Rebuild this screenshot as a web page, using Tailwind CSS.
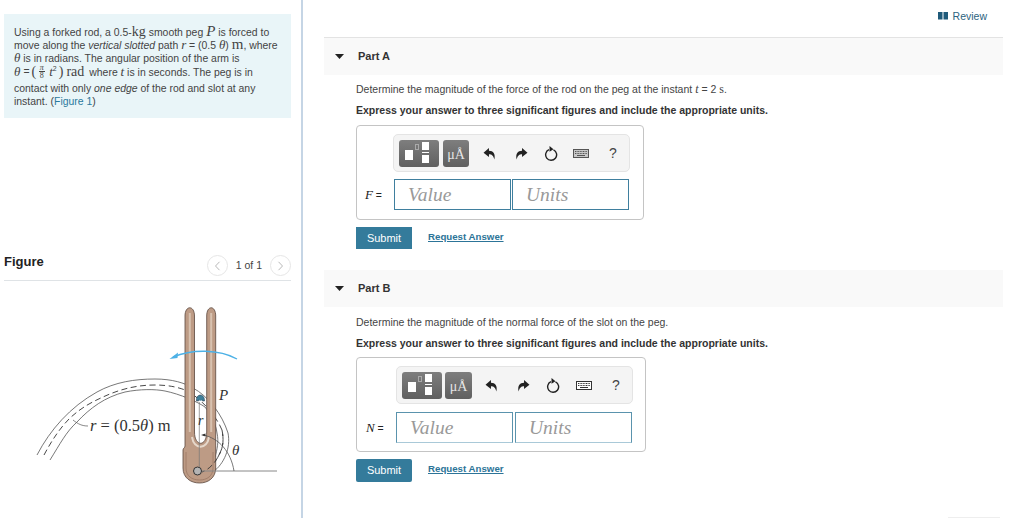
<!DOCTYPE html>
<html>
<head>
<meta charset="utf-8">
<script src="https://cdn.jsdelivr.net/npm/@tailwindcss/browser@4"></script>
</head>
<body class="bg-white font-['Liberation_Sans',Arial,sans-serif] text-[#333]">
<div class="relative flex w-[1024px] h-[518px] overflow-hidden">
  <!-- left -->
  <div class="w-[303px] h-[518px] shrink-0 border-r-2 border-[#c5d5e5] pt-[14px] pl-[4px]">
    <div class="w-[287px] h-[104px] bg-[#e9f5f8] pl-[10px] pt-[11px] text-[10.45px] leading-[13px] text-[#444]">
      <div class="h-[13px] whitespace-nowrap">Using a forked rod, a 0.5-<span class="font-['Liberation_Serif',serif] text-[14px]">kg</span> smooth peg <i class="font-['Liberation_Serif',serif] text-[15px]">P</i> is forced to</div>
      <div class="h-[13px] whitespace-nowrap">move along the <i>vertical slotted</i> path <i class="font-['Liberation_Serif',serif] text-[13px]">r</i> = (0.5 <i class="font-['Liberation_Serif',serif] text-[13px]">θ</i>) <span class="font-['Liberation_Serif',serif] text-[15px]">m</span>, where</div>
      <div class="h-[13px] whitespace-nowrap"><i class="font-['Liberation_Serif',serif] text-[13px]">θ</i> is in radians. The angular position of the arm is</div>
      <div class="h-[15px] flex items-center whitespace-nowrap"><i class="font-['Liberation_Serif',serif] text-[13px]">θ</i><span class="ml-[3px]">=</span><span class="ml-[2px] font-['Liberation_Serif',serif] text-[14px]">(</span><span class="inline-flex flex-col items-center w-[9px] font-['Liberation_Serif',serif] text-[8px] leading-[7px] ml-[1px]"><i class="border-b border-[#444] px-[1px]">π</i><span>8</span></span><i class="ml-[3px] font-['Liberation_Serif',serif] text-[13px]">t</i><span class="text-[7px] -mt-[6px]">2</span><span class="ml-[2px] font-['Liberation_Serif',serif] text-[14px]">)</span><span class="ml-[3px] font-['Liberation_Serif',serif] text-[14px]">rad</span><span class="ml-[5px]">where <i class="font-['Liberation_Serif',serif] text-[13px]">t</i> is in seconds. The peg is in</span></div>
      <div class="h-[13px] mt-[3px] whitespace-nowrap">contact with only <i>one edge</i> of the rod and slot at any</div>
      <div class="h-[13px] whitespace-nowrap">instant. (<span class="text-[#2a7a9e]">Figure 1</span>)</div>
    </div>
    <div class="w-[287px] h-[36px] mt-[127px] border-b border-[#dfe3e6] flex justify-between">
      <div class="text-[13px] font-bold text-[#222] mt-[9px] leading-[16px]">Figure</div>
      <div class="flex items-center gap-[8px] h-[21px] mt-[10px] text-[10.5px] text-[#444]">
        <div class="w-[21px] h-[21px] rounded-full border border-[#e6e6e6] flex items-center justify-center"><svg width="7" height="10" viewBox="0 0 7 10" fill="none" stroke="#b8b8b8" stroke-width="1"><path d="M5.500 .8 1.500 5l4 4.200"/></svg></div>
        <span>1 of 1</span>
        <div class="w-[21px] h-[21px] rounded-full border border-[#e6e6e6] flex items-center justify-center"><svg width="7" height="10" viewBox="0 0 7 10" fill="none" stroke="#b8b8b8" stroke-width="1"><path d="M1.500 .8 5.500 5l-4 4.200"/></svg></div>
      </div>
    </div>
    <svg class="block" width="296" height="237" viewBox="4 281 296 237" font-family="'Liberation Serif',serif" fill="none">
      <!-- curved slot -->
      <path d="M37 455C50 430 70 407 97 392C115 382 135 379 155 379C172 379 185 383 193 388C208 396 222 414 228 433C231 448 224 464 213 472" stroke="#555" stroke-width=".8"/>
      <path d="M50 460C60 444 66 432 77 422C90 408 105 397 125 392C140 389 155 389 165 391C180 394 198 402 205 407C212 416 216 425 217 433C219 442 217 450 215 457" stroke="#555" stroke-width=".8"/>
      <path d="M44 455C52 440 60 428 70 418C82 407 92 402 103 397C118 390 135 385 155 385C170 385 180 388 185 390C195 394 214 411 222 430C224 440 223 447 220 453C215 464 208 470 202 472" stroke="#333" stroke-width=".9" stroke-dasharray="6 3.500"/>
      <!-- rod -->
      <path d="M185 316C185 305 194.500 305 194.500 316V432C194.500 447 206.700 447 206.700 432V316C206.700 305 215.700 305 215.700 316V468C215.700 478 208 483 199.500 483C191 483 183 478 183 468V450C183 448 185 448 185 446Z" fill="#bd9b85" stroke="#5a463c" stroke-width=".8"/>
      <path d="M189.800 313V432M211.200 313V432" stroke="#d8c2b0" stroke-width="2"/>
      <path d="M192 437C194 450 207 450 209 437" stroke="#e6d8cb" stroke-width="2"/>
      <path d="M186 452V468C186 476 192 480 199.500 480C207 480 213 476 213 468V452" stroke="#a27f6b" stroke-width="1"/>
      <path d="M222 430C224 440 223 447 220 453C215 464 208 470 202 472" stroke="#333" stroke-width=".9" stroke-dasharray="6 3.500"/>
      <path d="M199.300 402V468" stroke="#777" stroke-width=".7"/>
      <circle cx="197.500" cy="471" r="4" fill="#b4b4b4" stroke="#333" stroke-width="1"/>
      <path d="M202 471H277" stroke="#888" stroke-width="1"/>
      <path d="M203 435C219 438 231 452 234 471" stroke="#555" stroke-width=".8"/>
      <path d="M201 435l4.500 -1.600v3.200z" fill="#333"/>
      <!-- peg -->
      <path d="M196.500 401C195.500 393 205 393 204.500 401H202.500C202.500 397.500 198.500 397.500 198.500 401Z" fill="#3f7f99" stroke="#234" stroke-width=".5"/>
      <circle cx="200.500" cy="398.500" r="2.200" fill="#3f7f99"/>
      <!-- arrow -->
      <path d="M237 359C219 349 192 349 173 357" stroke="#4db1e6" stroke-width="1.400"/>
      <path d="M169.500 359 178 352.500 177.500 358Z" fill="#4db1e6"/>
      <path d="M73 420C78 424 82 426 88 426" stroke="#555" stroke-width=".7"/>
      <g fill="#333" font-size="16.500">
        <text x="90" y="431"><tspan font-style="italic">r</tspan> = (0.5<tspan font-style="italic">θ</tspan>) m</text>
        <text x="219" y="400" font-style="italic" font-size="15">P</text>
        <text x="232" y="455" font-style="italic" font-size="15">θ</text>
        <text x="198" y="425" font-style="italic" font-size="14">r</text>
      </g>
    </svg>
  </div>
  <!-- right -->
  <div class="flex-1 pl-[21px] pt-[10px] min-w-0">
    <div class="w-[679px] h-[27px] flex justify-end items-start pr-[16px]">
      <div class="flex items-center gap-[5px] text-[10.5px] leading-[12px] text-[#2c6380]"><svg width="10" height="8" viewBox="0 0 10 8"><path d="M0 0H4.500V7.500H0ZM5.500 0H10V7.500H5.500Z" fill="#1f5a7a"/></svg>Review</div>
    </div>

    <section class="w-[679px] h-[233px]">
      <div class="h-[38px] border-t border-[#e3e3e3] bg-[#f9f9f9] flex items-center">
        <svg class="ml-[11px]" width="9" height="5" viewBox="0 0 9 5"><path d="M0 0H9L4.500 5Z" fill="#222"/></svg>
        <span class="ml-[14px] text-[11px] font-bold text-[#333]">Part A</span>
      </div>
      <div class="pl-[32px]">
        <p class="mt-[7px] text-[10.5px] leading-[14px] text-[#444] h-[14px] whitespace-nowrap">Determine the magnitude of the force of the rod on the peg at the instant <i class="font-['Liberation_Serif',serif] text-[12px]">t</i> = 2 <span class="font-['Liberation_Serif',serif] text-[12px]">s</span>.</p>
        <p class="mt-[7px] text-[10.5px] leading-[14px] font-bold text-[#333] h-[14px] whitespace-nowrap">Express your answer to three significant figures and include the appropriate units.</p>
        <div class="mt-[8px] w-[288px] h-[95px] border border-[#c4c4c4] rounded-[4px] pl-[36px] pt-[8px]">
          <div class="w-[237px] h-[38px] bg-[#f4f4f4] border border-[#e4e4e4] rounded-[5px] flex items-center pl-[5px]">
            <div class="w-[40px] h-[27px] rounded-[3px] bg-gradient-to-b from-[#7e7e7e] to-[#606060] relative">
              <div class="absolute left-[6px] top-[10px] w-[8px] h-[10px] bg-white"></div>
              <div class="absolute left-[16px] top-[4px] w-[4px] h-[6px] border border-[#aaa]"></div>
              <div class="absolute left-[23px] top-[2px] w-[7px] h-[8px] bg-white"></div>
              <div class="absolute left-[23px] top-[12px] w-[7px] h-[1px] bg-white"></div>
              <div class="absolute left-[23px] top-[15px] w-[7px] h-[8px] bg-white"></div>
            </div>
            <div class="ml-[4px] w-[26px] h-[27px] rounded-[3px] bg-gradient-to-b from-[#7e7e7e] to-[#606060] text-[#e6e6e6] font-['Liberation_Serif',serif] text-[14px] flex items-center justify-center pt-[2px]">μÅ</div>
            <svg class="ml-[14px]" width="13" height="13" viewBox="0 0 12 12"><path d="M5.500 1 .5 5.200 5.500 9.200V6.600C8 6.600 9.600 7.800 10.500 11.500 11.700 6.500 9.500 3.500 5.500 3.500Z" fill="#222"/></svg>
            <svg class="ml-[19px]" width="13" height="13" viewBox="0 0 12 12"><path d="M6.500 1 11.500 5.200 6.500 9.200V6.600C4 6.600 2.400 7.800 1.500 11.500 .3 6.500 2.500 3.500 6.500 3.500Z" fill="#222"/></svg>
            <svg class="ml-[16px]" width="14" height="15" viewBox="0 0 14 15" fill="none"><path d="M5 3.700A5.500 5.500 0 1 0 9.500 3.800" stroke="#222" stroke-width="1.400"/><path d="M5.500 0 9.500 3.200 5.500 5.800Z" fill="#222"/></svg>
            <svg class="ml-[15px]" width="16" height="9" viewBox="0 0 16 9"><rect x=".5" y=".5" width="15" height="8" fill="#c8c8c8" stroke="#555"/><path d="M2 2.500H14M2 4.500H14" stroke="#555" stroke-dasharray="1 .6"/><path d="M4 6.500H12" stroke="#555"/></svg>
            <span class="ml-[20px] text-[14px] text-[#444]">?</span>
          </div>
          <div class="flex items-center mt-[7px] -ml-[28px] h-[31px]">
            <span class="w-[29px] text-[10.5px] text-[#222] whitespace-nowrap"><i class="font-['Liberation_Serif',serif] text-[13px]">F</i> =</span>
            <div class="w-[117px] h-[31px] border border-[#3f7f9e] pl-[13px] font-['Liberation_Serif',serif] italic text-[19.5px] leading-[29px] text-[#999]">Value</div>
            <div class="ml-[1px] w-[117px] h-[31px] border border-[#3f7f9e] pl-[13px] font-['Liberation_Serif',serif] italic text-[19.5px] leading-[29px] text-[#999]">Units</div>
          </div>
        </div>
        <div class="flex items-center mt-[7px]">
          <div class="w-[56px] h-[22px] bg-[#347b9b] text-white text-[11px] flex items-center justify-center">Submit</div>
          <span class="ml-[16px] text-[9.7px] font-bold text-[#2c7498] underline -mt-[2px]">Request Answer</span>
        </div>
      </div>
    </section>

    <section class="w-[679px]">
      <div class="h-[37px] bg-[#f9f9f9] flex items-center">
        <svg class="ml-[11px]" width="9" height="5" viewBox="0 0 9 5"><path d="M0 0H9L4.500 5Z" fill="#222"/></svg>
        <span class="ml-[14px] text-[11px] font-bold text-[#333]">Part B</span>
      </div>
      <div class="pl-[32px]">
        <p class="mt-[8px] text-[10.5px] leading-[14px] text-[#444] h-[14px] whitespace-nowrap">Determine the magnitude of the normal force of the slot on the peg.</p>
        <p class="mt-[7px] text-[10.5px] leading-[14px] font-bold text-[#333] h-[14px] whitespace-nowrap">Express your answer to three significant figures and include the appropriate units.</p>
        <div class="mt-[7px] w-[290px] h-[95px] border border-[#c4c4c4] rounded-[4px] pl-[39px] pt-[8px]">
          <div class="w-[237px] h-[38px] bg-[#f4f4f4] border border-[#e4e4e4] rounded-[5px] flex items-center pl-[5px]">
            <div class="w-[40px] h-[27px] rounded-[3px] bg-gradient-to-b from-[#7e7e7e] to-[#606060] relative">
              <div class="absolute left-[6px] top-[10px] w-[8px] h-[10px] bg-white"></div>
              <div class="absolute left-[16px] top-[4px] w-[4px] h-[6px] border border-[#aaa]"></div>
              <div class="absolute left-[23px] top-[2px] w-[7px] h-[8px] bg-white"></div>
              <div class="absolute left-[23px] top-[12px] w-[7px] h-[1px] bg-white"></div>
              <div class="absolute left-[23px] top-[15px] w-[7px] h-[8px] bg-white"></div>
            </div>
            <div class="ml-[3px] w-[27px] h-[27px] rounded-[3px] bg-gradient-to-b from-[#7e7e7e] to-[#606060] text-[#e6e6e6] font-['Liberation_Serif',serif] text-[14px] flex items-center justify-center pt-[2px]">μÅ</div>
            <svg class="ml-[13px]" width="13" height="13" viewBox="0 0 12 12"><path d="M5.500 1 .5 5.200 5.500 9.200V6.600C8 6.600 9.600 7.800 10.500 11.500 11.700 6.500 9.500 3.500 5.500 3.500Z" fill="#222"/></svg>
            <svg class="ml-[19px]" width="13" height="13" viewBox="0 0 12 12"><path d="M6.500 1 11.500 5.200 6.500 9.200V6.600C4 6.600 2.400 7.800 1.500 11.500 .3 6.500 2.500 3.500 6.500 3.500Z" fill="#222"/></svg>
            <svg class="ml-[16px]" width="14" height="15" viewBox="0 0 14 15" fill="none"><path d="M5 3.700A5.500 5.500 0 1 0 9.500 3.800" stroke="#222" stroke-width="1.400"/><path d="M5.500 0 9.500 3.200 5.500 5.800Z" fill="#222"/></svg>
            <svg class="ml-[16px]" width="16" height="9" viewBox="0 0 16 9"><rect x=".5" y=".5" width="15" height="8" fill="#fff" stroke="#333"/><path d="M2 2.500H14M2 4.500H14" stroke="#333" stroke-dasharray="1 .6"/><path d="M4 6.500H12" stroke="#333"/></svg>
            <span class="ml-[20px] text-[14px] text-[#444]">?</span>
          </div>
          <div class="flex items-center mt-[8px] -ml-[30px] h-[31px]">
            <span class="w-[30px] text-[10.5px] text-[#222] whitespace-nowrap"><i class="font-['Liberation_Serif',serif] text-[13px]">N</i> =</span>
            <div class="w-[117px] h-[31px] border border-[#5a93ad] border-b-[#a9c9d8] pl-[13px] font-['Liberation_Serif',serif] italic text-[19.5px] leading-[29px] text-[#999]">Value</div>
            <div class="ml-[2px] w-[117px] h-[31px] border border-[#5a93ad] border-b-[#a9c9d8] pl-[13px] font-['Liberation_Serif',serif] italic text-[19.5px] leading-[29px] text-[#999]">Units</div>
          </div>
        </div>
        <div class="flex items-center mt-[7px]">
          <div class="w-[56px] h-[23px] rounded-[2px] bg-[#347b9b] text-white text-[11px] flex items-center justify-center">Submit</div>
          <span class="ml-[16px] text-[9.7px] font-bold text-[#2c7498] underline -mt-[2px]">Request Answer</span>
        </div>
      </div>
    </section>
  </div>
  <div class="absolute left-[948px] top-[517px] w-[52px] h-[1px] bg-[#eeeeee]"></div>
</div>
</body>
</html>
